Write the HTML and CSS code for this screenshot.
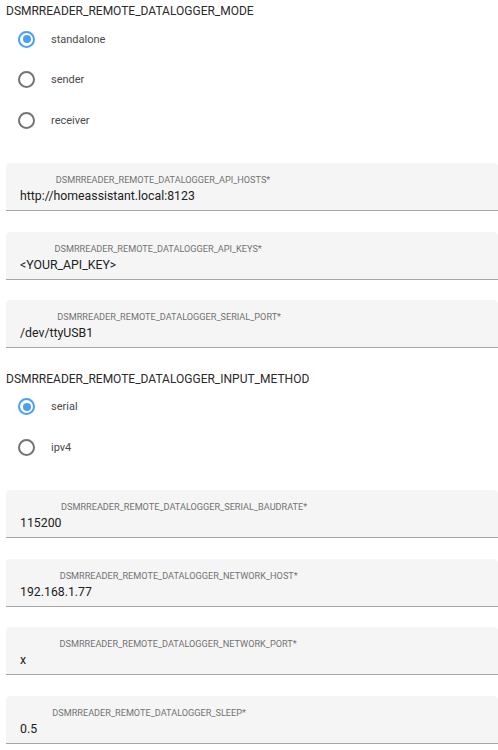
FILE: index.html
```html
<!DOCTYPE html>
<html>
<head>
<meta charset="utf-8">
<link rel="stylesheet" href="styles.css">
</head>
<body>
<div class="page">
  <div class="group">
    <div class="heading">DSMRREADER_REMOTE_DATALOGGER_MODE</div>
    <div class="radio-row"><span class="radio checked"></span><span class="radio-label">standalone</span></div>
    <div class="radio-row"><span class="radio"></span><span class="radio-label">sender</span></div>
    <div class="radio-row"><span class="radio"></span><span class="radio-label">receiver</span></div>
  </div>
  <div class="field"><span class="flabel">DSMRREADER_REMOTE_DATALOGGER_API_HOSTS*</span><span class="value">http://homeassistant.local:8123</span></div>
  <div class="field"><span class="flabel">DSMRREADER_REMOTE_DATALOGGER_API_KEYS*</span><span class="value">&lt;YOUR_API_KEY&gt;</span></div>
  <div class="field"><span class="flabel">DSMRREADER_REMOTE_DATALOGGER_SERIAL_PORT*</span><span class="value">/dev/ttyUSB1</span></div>
  <div class="group">
    <div class="heading">DSMRREADER_REMOTE_DATALOGGER_INPUT_METHOD</div>
    <div class="radio-row"><span class="radio checked"></span><span class="radio-label">serial</span></div>
    <div class="radio-row"><span class="radio"></span><span class="radio-label">ipv4</span></div>
  </div>
  <div class="field"><span class="flabel">DSMRREADER_REMOTE_DATALOGGER_SERIAL_BAUDRATE*</span><span class="value">115200</span></div>
  <div class="field"><span class="flabel">DSMRREADER_REMOTE_DATALOGGER_NETWORK_HOST*</span><span class="value">192.168.1.77</span></div>
  <div class="field"><span class="flabel">DSMRREADER_REMOTE_DATALOGGER_NETWORK_PORT*</span><span class="value">x</span></div>
  <div class="field"><span class="flabel">DSMRREADER_REMOTE_DATALOGGER_SLEEP*</span><span class="value">0.5</span></div>
</div>
</body>
</html>
```
FILE: styles.css
```css
html, body {
  margin: 0;
  padding: 0;
  background: #ffffff;
}
body {
  font-family: Roboto, "Liberation Sans", sans-serif;
  color: #212121;
}
.page {
  padding-left: 6px;
  padding-top: 1px;
  display: flex;
  flex-direction: column;
}
.group {
  display: flex;
  flex-direction: column;
  margin-bottom: 22.5px;
}
.heading {
  font-size: 12px;
  line-height: 18px;
  height: 18px;
  padding-top: 1px;
  box-sizing: border-box;
  color: #2a2a2a;
  white-space: nowrap;
}
.radio-row {
  height: 40.5px;
  display: flex;
  align-items: center;
}
.radio {
  box-sizing: border-box;
  width: 17px;
  height: 17px;
  margin-left: 12px;
  border: 2px solid #747474;
  border-radius: 50%;
  display: flex;
  align-items: center;
  justify-content: center;
}
.radio.checked {
  border-color: #4a9ff5;
}
.radio.checked::after {
  content: "";
  width: 8px;
  height: 8px;
  border-radius: 50%;
  background: #4a9ff5;
}
.radio-label {
  margin-left: 16px;
  font-size: 11px;
  color: #4a4a4a;
}
.field {
  box-sizing: border-box;
  height: 48px;
  margin-bottom: 20.5px;
  background: #f5f5f5;
  border-radius: 4px 4px 0 0;
  border-bottom: 1px solid #a6a6a6;
  padding-left: 14px;
  display: flex;
  flex-direction: column;
  align-items: flex-start;
  white-space: nowrap;
}
.flabel {
  font-size: 12.2px;
  line-height: 14px;
  color: #727272;
  transform: scale(0.75);
  transform-origin: center center;
  margin-top: 10px;
}
.value {
  font-size: 12.3px;
  line-height: 15px;
  margin-top: 2px;
  color: #212121;
}
```
